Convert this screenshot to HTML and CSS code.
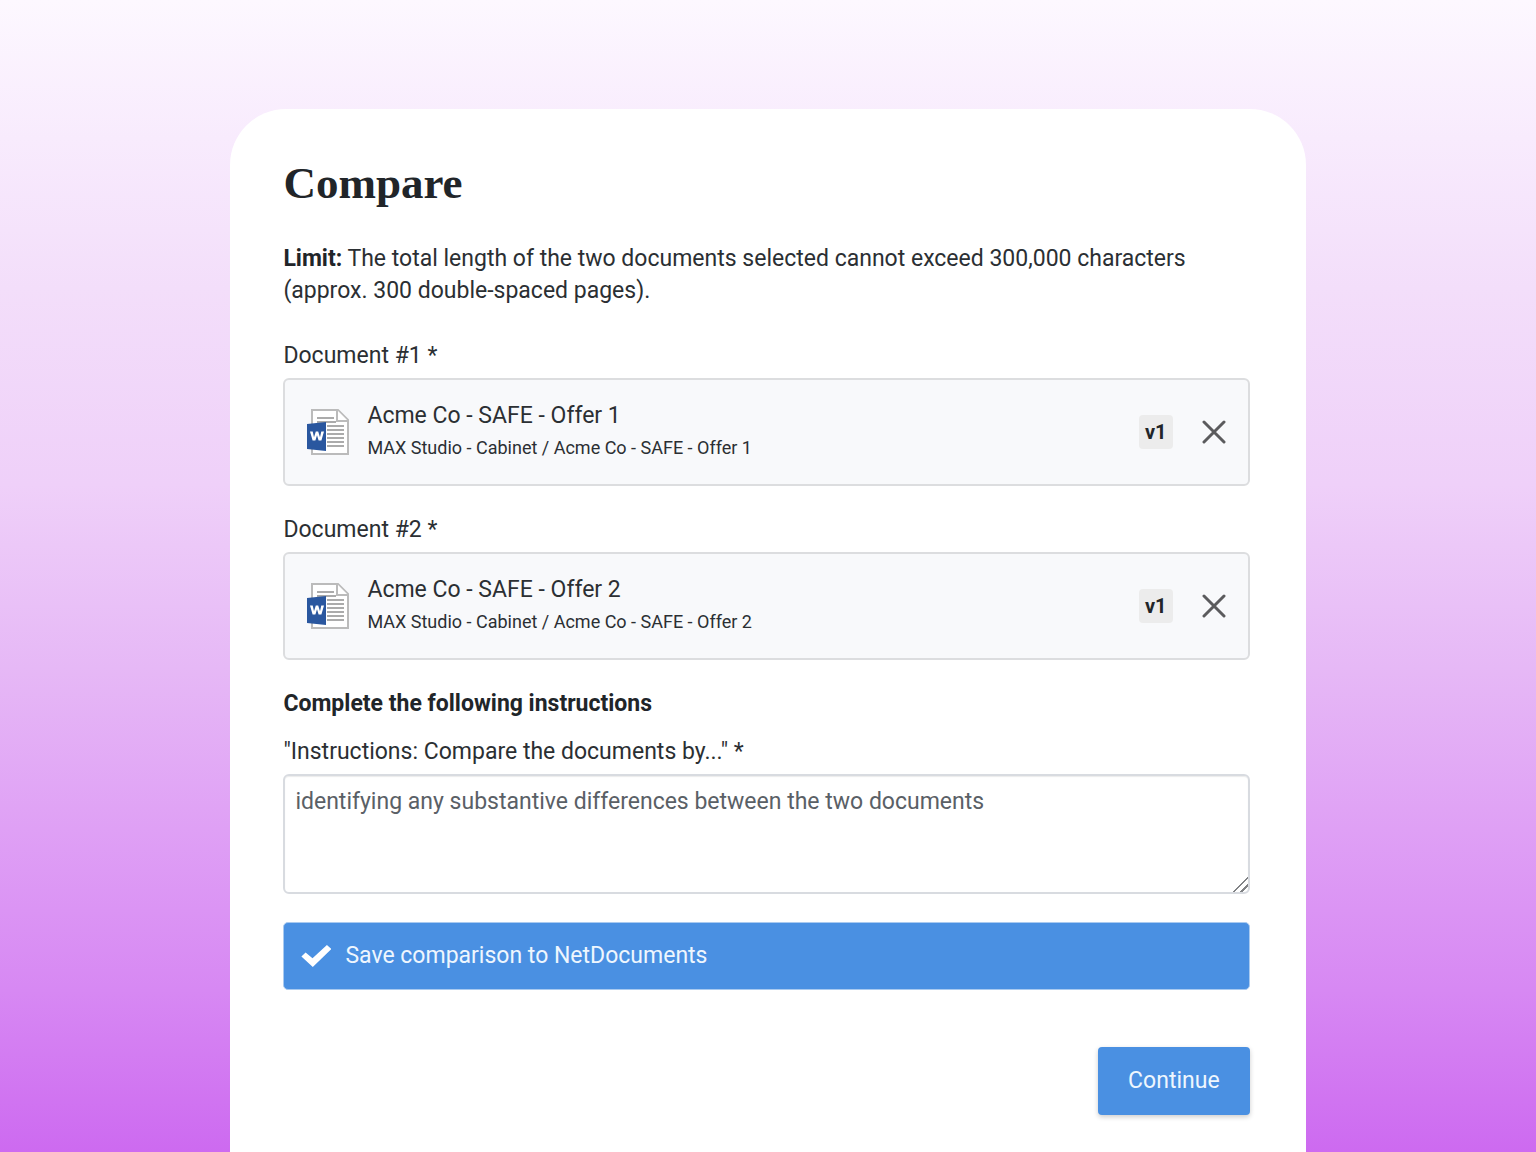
FILE: index.html
```
<!DOCTYPE html>
<html lang="en">
  <head>
    <meta charset="utf-8" />
    <meta name="viewport" content="width=device-width, initial-scale=1.0" />
    <title>Compare</title>
    <link rel="stylesheet" href="styles.css">
  </head>
  <body>
    <svg class="sprite" aria-hidden="true">
      <symbol id="word" viewBox="0 0 42 46">
        <path d="M5 1H31L41 11V45H5Z" fill="#fff" stroke="#bbb" stroke-width="2" />
        <path d="M30 1V12H41" fill="#fff" stroke="#bbb" stroke-width="2" />
        <path d="M10 9H27M10 13H29M20 17H37M20 21H37M20 25H37M20 29H37M20 33H37M20 37H37" stroke="#ababab" stroke-width="2" />
        <path d="M0 15L19 13V42L0 40Z" fill="#2a579f" />
        <path d="M3 22.5H5.7L7 28.2L8.8 22.5H11.2L13 28.2L14.3 22.5H17L14.4 31.5H11.6L10 26.3L8.4 31.5H5.6Z" fill="#fff" />
      </symbol>
      <symbol id="close" viewBox="0 0 24 24">
        <path d="M2 2L22 22M22 2L2 22" fill="none" stroke="#5b5b5d" stroke-width="3" stroke-linecap="round" />
      </symbol>
    </svg>

    <form class="card">
      <h1>Compare</h1>
      <p class="limit">
        <strong>Limit:</strong> The total length of the two documents selected cannot exceed 300,000 characters
        (approx. 300 double-spaced pages).
      </p>

      <div class="form-group">
        <h2 class="label" id="doc1">Document #1 *</h2>
        <div class="document" role="group" aria-labelledby="doc1">
          <svg class="file-icon"><use href="#word" /></svg>
          <div class="info">
            <div class="name">Acme Co - SAFE - Offer 1</div>
            <div class="path">MAX Studio - Cabinet / Acme Co - SAFE - Offer 1</div>
          </div>
          <span class="version">v1</span>
          <button type="button" class="remove" aria-label="Remove document 1"><svg><use href="#close" /></svg></button>
        </div>
      </div>

      <div class="form-group">
        <h2 class="label" id="doc2">Document #2 *</h2>
        <div class="document" role="group" aria-labelledby="doc2">
          <svg class="file-icon"><use href="#word" /></svg>
          <div class="info">
            <div class="name">Acme Co - SAFE - Offer 2</div>
            <div class="path">MAX Studio - Cabinet / Acme Co - SAFE - Offer 2</div>
          </div>
          <span class="version">v1</span>
          <button type="button" class="remove" aria-label="Remove document 2"><svg><use href="#close" /></svg></button>
        </div>
      </div>

      <h2 class="section-title">Complete the following instructions</h2>
      <div class="form-group">
        <label class="label" for="instructions">"Instructions: Compare the documents by..." *</label>
        <textarea id="instructions" rows="3">identifying any substantive differences between the two documents</textarea>
      </div>

      <label class="save" for="save">
        <input type="checkbox" id="save" checked />
        Save comparison to NetDocuments
      </label>

      <div class="actions">
        <button type="submit" class="btn">Continue</button>
      </div>
    </form>
  </body>
</html>
```
FILE: styles.css
```
* {
  box-sizing: border-box;
}
html {
  min-height: 100%;
  background: linear-gradient(#fdf8ff 0%, #f8ebfd 12%, #f3defa 25%, #efd0f9 42%, #e6b8f6 58%, #dfa0f5 72%, #d788f3 86%, #cd6af0 100%);
}
body {
  margin: 0;
  padding-top: 109px;
  color: #2b2f33;
  font: 23px/32px Roboto, sans-serif;
}
h1,
h2,
p {
  margin: 0;
}
input,
button,
textarea {
  font: inherit;
}
.sprite {
  display: none;
}
.card {
  width: 70%;
  margin: 0 auto;
  padding: 46px 56px 37px 53px;
  background: #fff;
  border-radius: 56px 56px 0 0;
}
h1 {
  margin-bottom: 32px;
  color: #212529;
  font: bold 45px/56px "Liberation Serif", serif;
}
strong {
  color: #212529;
}
.limit {
  margin-bottom: 33px;
}
.form-group {
  margin-bottom: 28px;
}
.label {
  display: block;
  margin-bottom: 6px;
  font-size: 23px;
  font-weight: normal;
}
.document {
  display: flex;
  align-items: center;
  padding: 20px 22px;
  background: #f8f9fb;
  border: 2px solid #dcdddf;
  border-radius: 6px;
}
.file-icon {
  width: 42px;
  height: 46px;
  margin-right: 18px;
}
.info {
  flex: 1;
}
.path {
  font-size: 18px;
}
.version {
  padding: 1px 6px;
  background: #ececec;
  border-radius: 4px;
  color: #212529;
  font-size: 20px;
  font-weight: bold;
}
.remove {
  display: flex;
  margin-left: 29px;
  padding: 0;
  background: none;
  border: none;
  cursor: pointer;
}
.remove svg {
  width: 24px;
  height: 24px;
}
.section-title {
  margin-bottom: 16px;
  color: #212529;
  font-size: 23px;
  font-weight: bold;
}
textarea {
  display: block;
  width: 100%;
  height: 120px;
  padding: 10px;
  background: #fff;
  border: 2px solid #d8dbe0;
  border-radius: 6px;
  box-shadow: inset 0 1px 1px rgba(0, 0, 0, 0.08);
  color: #5a6066;
  resize: vertical;
}
textarea::-webkit-resizer {
  background: linear-gradient(135deg, transparent 47%, #808285 47%, #808285 55%, transparent 55%, transparent 72%, #808285 72%, #808285 80%, transparent 80%);
}
.save {
  display: flex;
  align-items: center;
  gap: 14px;
  padding: 17px;
  background: #4a90e2;
  border: 1px solid #a9caf0;
  border-radius: 5px;
  color: #eef6fe;
  cursor: pointer;
}
.save input {
  appearance: none;
  width: 30px;
  height: 22px;
  margin: 0;
  background: #fff;
  clip-path: polygon(0 52%, 14% 34%, 37% 60%, 85% 0, 100% 18%, 38% 100%);
}
.save input:not(:checked) {
  opacity: 0.4;
}
.actions {
  display: flex;
  justify-content: flex-end;
  margin-top: 57px;
}
.btn {
  padding: 18px 30px;
  background: #4a90e2;
  border: none;
  border-radius: 4px;
  box-shadow: 0 2px 5px rgba(0, 0, 0, 0.2);
  color: #eef6fe;
  cursor: pointer;
}
.btn:hover {
  background: #3b82d6;
}
```
